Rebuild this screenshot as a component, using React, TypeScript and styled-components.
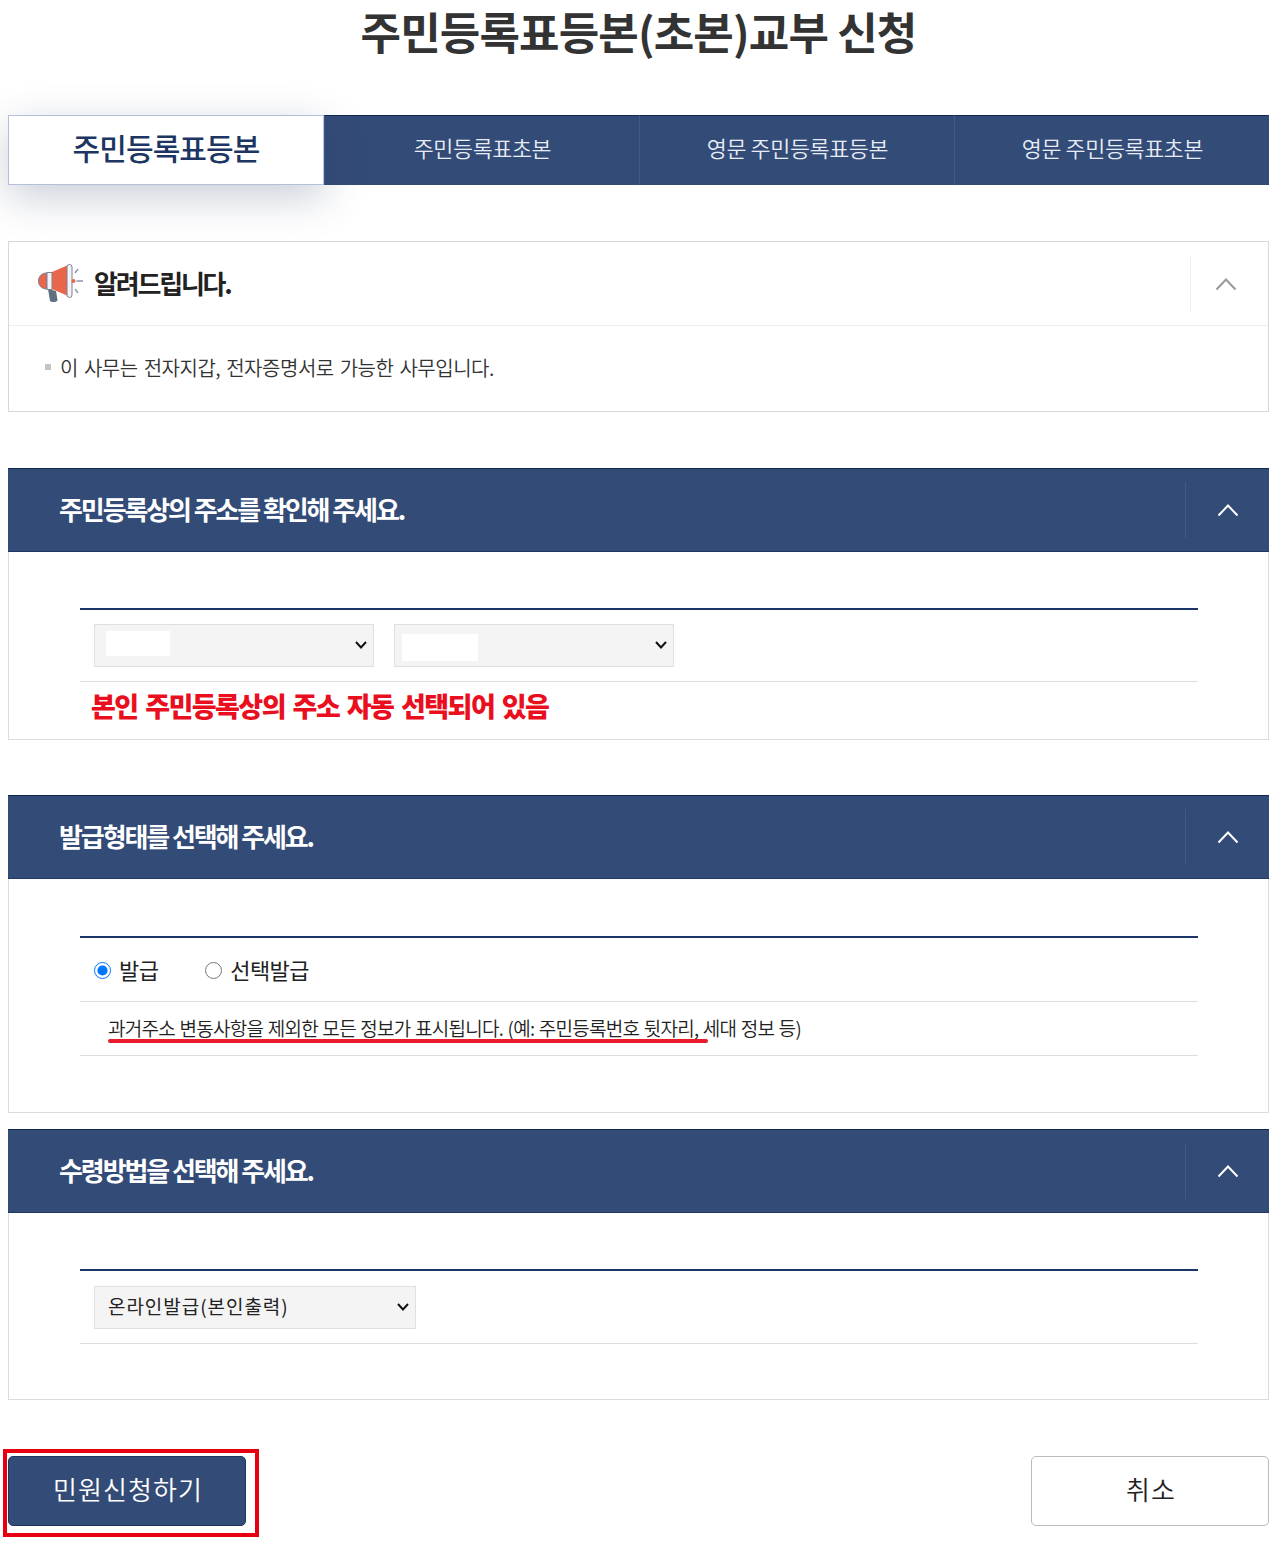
import React from 'react'
import styled, { createGlobalStyle } from 'styled-components'

const GlobalStyle = createGlobalStyle`
  html, body {
    margin: 0;
    padding: 0;
    background: #fff;
  }
  body {
    font-family: 'Noto Sans CJK KR', 'Noto Sans', sans-serif;
    color: #222;
  }
  * {
    box-sizing: border-box;
  }
`

const Page = styled.div`
  width: 1280px;
  height: 1546px;
  padding: 0 11px 0 8px;
  overflow: hidden;
`
const Title = styled.h1`
  margin: 0;
  height: 115px;
  padding-top: 1px;
  text-align: center;
  font-size: 44px;
  line-height: 60px;
  font-weight: 700;
  letter-spacing: -0.85px;
  color: #333;
`
const TabList = styled.ul`
  display: grid;
  grid-template-columns: 316px repeat(3, 315px);
  height: 70px;
  margin: 0 0 56px;
  padding: 0;
  list-style: none;
`
const Tab = styled.li<{ $active?: boolean }>`
  display: flex;
  align-items: center;
  justify-content: center;
  padding: ${(p) => (p.$active ? '0 0 6px' : '0 0 6px 2px')};
  font-size: ${(p) => (p.$active ? '30px' : '21.8px')};
  font-weight: ${(p) => (p.$active ? 500 : 350)};
  letter-spacing: ${(p) => (p.$active ? '-0.9px' : '-0.4px')};
  color: ${(p) => (p.$active ? '#1c3563' : '#e8edf5')};
  background: ${(p) => (p.$active ? '#fff' : '#334b77')};
  border: 1px solid ${(p) => (p.$active ? '#b4c0da' : '#334b77')};
  border-top-color: ${(p) => (p.$active ? '#b4c0da' : '#10294f')};
  border-left-color: ${(p) => (p.$active ? '#b4c0da' : '#43598a')};
  box-shadow: ${(p) => (p.$active ? '0 12px 40px rgba(40, 60, 100, 0.25)' : 'none')};
  position: relative;
  z-index: ${(p) => (p.$active ? 1 : 0)};
`
const Notice = styled.section`
  height: 171px;
  margin-bottom: 56px;
  border: 1px solid #d8d8d8;
`
const NoticeHead = styled.header`
  display: flex;
  align-items: center;
  height: 84px;
  padding-left: 29px;
  border-bottom: 1px solid #eee;
`
const NoticeTitle = styled.h2`
  flex: 1;
  margin: 0 0 2px 10px;
  font-size: 26px;
  font-weight: 700;
  letter-spacing: -2.2px;
  color: #222;
`
const Toggle = styled.div<{ $light?: boolean }>`
  display: flex;
  align-items: center;
  justify-content: center;
  width: ${(p) => (p.$light ? '78px' : '84px')};
  height: 56px;
  padding-right: ${(p) => (p.$light ? '7px' : '0')};
  margin-bottom: ${(p) => (p.$light ? '0' : '1px')};
  border-left: 1px solid ${(p) => (p.$light ? '#f0f0f0' : '#43598a')};
  color: ${(p) => (p.$light ? '#999' : '#fff')};
`
const NoticeBody = styled.p`
  display: flex;
  align-items: center;
  height: 82px;
  margin: 0;
  padding-left: 36px;
  font-size: 20px;
  font-weight: 350;
  letter-spacing: -0.48px;
  word-spacing: 2px;
  color: #333;
  &::before {
    content: '';
    width: 6px;
    height: 6px;
    margin-right: 9px;
    background: #c4c4c4;
  }
`
const Panel = styled.section<{ $height: number; $gap: number }>`
  height: ${(p) => p.$height}px;
  margin-bottom: ${(p) => p.$gap}px;
  border: 1px solid #dcdcdc;
  border-top: 0;
`
const PanelHead = styled.header`
  display: flex;
  align-items: center;
  height: 84px;
  margin: 0 -1px;
  padding-left: 51px;
  background: #334b77;
  border-top: 1px solid #10294f;
  border-bottom: 1px solid #1e3766;
`
const PanelTitle = styled.h2`
  flex: 1;
  margin: 0 0 3px;
  font-size: 26px;
  font-weight: 700;
  letter-spacing: -2.1px;
  color: #fff;
`
const PanelBody = styled.div<{ $top: number }>`
  margin: ${(p) => p.$top}px 70px 0 71px;
  border-top: 2px solid #1a3566;
`
const FieldRow = styled.div<{ $height: number }>`
  display: flex;
  align-items: center;
  gap: 20px;
  height: ${(p) => p.$height}px;
  padding-left: 14px;
  border-bottom: 1px solid #ddd;
`
const SelectWrap = styled.div<{ $width: number }>`
  position: relative;
  width: ${(p) => p.$width}px;
  height: 43px;
`
const Select = styled.select`
  display: block;
  width: 100%;
  height: 100%;
  padding: 0 0 3px 13px;
  appearance: none;
  background: #f4f4f4;
  border: 1px solid #e0e0e0;
  border-radius: 0;
  outline: 0;
  font-family: inherit;
  font-size: 19px;
  letter-spacing: 0.95px;
  color: #222;
`
const SelectArrow = styled.svg`
  position: absolute;
  right: 6px;
  top: 15px;
  pointer-events: none;
`
const Redaction = styled.span<{ $left: number; $top: number; $width: number; $height: number }>`
  position: absolute;
  left: ${(p) => p.$left}px;
  top: ${(p) => p.$top}px;
  width: ${(p) => p.$width}px;
  height: ${(p) => p.$height}px;
  background: #fff;
`
const Alert = styled.p`
  margin: 7px 0 0 11px;
  font-size: 27px;
  line-height: 34px;
  font-weight: 900;
  letter-spacing: -1.55px;
  word-spacing: 3px;
  color: #ea0f1e;
`
const RadioLabel = styled.label`
  display: flex;
  align-items: center;
  gap: 8px;
  margin: 0 27px 2px 0;
  font-size: 22px;
  font-weight: 400;
  letter-spacing: -0.6px;
  color: #222;
`
const Radio = styled.input`
  width: 17px;
  height: 17px;
  margin: 3px 0 0;
`
const Description = styled.div`
  display: flex;
  align-items: center;
  height: 54px;
  padding: 0 0 2px 28px;
  border-bottom: 1px solid #ddd;
  font-size: 19px;
  font-weight: 350;
  letter-spacing: -0.7px;
  word-spacing: 0.8px;
  color: #222;
`
const Marked = styled.span`
  position: relative;
  &::after {
    content: '';
    position: absolute;
    left: 0;
    bottom: -2px;
    width: 600px;
    height: 4px;
    border-radius: 2px;
    background: #ea1c2c;
  }
`
const Actions = styled.div`
  display: flex;
  justify-content: space-between;
`
const Highlight = styled.div`
  position: relative;
  &::before {
    content: '';
    position: absolute;
    inset: -7px -13px -11px -5px;
    border: 4px solid #e60012;
    pointer-events: none;
  }
`
const Button = styled.button<{ $primary?: boolean }>`
  display: block;
  width: 238px;
  height: 70px;
  padding: 0 0 6px 2px;
  font-family: inherit;
  font-size: 26px;
  font-weight: 350;
  letter-spacing: 1.1px;
  border-radius: 5px;
  border: 1px solid ${(p) => (p.$primary ? '#1c3563' : '#bbb')};
  background: ${(p) => (p.$primary ? '#334b77' : '#fff')};
  color: ${(p) => (p.$primary ? '#fff' : '#222')};
`

const Chevron = () => (
  <svg width="22" height="14" viewBox="0 0 22 14" fill="none" stroke="currentColor" strokeWidth="2">
    <path d="M1.5 12.5 11 2.5l9.5 10" />
  </svg>
)

const Arrow = () => (
  <SelectArrow width="14" height="12" viewBox="0 0 14 12" fill="none" stroke="#111" strokeWidth="2">
    <path d="M2 3l5 5.500L12 3" />
  </SelectArrow>
)

const Megaphone = () => (
  <svg width="46" height="40" viewBox="0 0 46 40">
    <path d="M10 25l8 2 1.500 9c.3 2-5.500 3-7.500 1z" fill="#5f7180" />
    <path d="M9 9C3 9 .5 13 .5 17S3 25 9 25z" fill="#e8674a" stroke="#7b8197" />
    <path d="M14 8 29 1.500v30L14 25z" fill="#e8674a" />
    <rect x="9" y="8.500" width="5" height="17" fill="#f3f3f6" stroke="#7b8197" />
    <rect x="29" y=".5" width="5" height="33" rx="2.500" fill="#f3f3f6" stroke="#7b8197" />
    <circle cx="35.500" cy="17" r="2" fill="#e8674a" />
    <path d="M37 9l3-4M38.500 17H45M37 25l3 4" stroke="#8a93a8" strokeWidth="1.300" fill="none" />
  </svg>
)

const Section = ({
  title,
  height,
  gap,
  bodyTop = 56,
  children
}: {
  title: string
  height: number
  gap: number
  bodyTop?: number
  children: React.ReactNode
}) => (
  <Panel $height={height} $gap={gap}>
    <PanelHead>
      <PanelTitle>{title}</PanelTitle>
      <Toggle>
        <Chevron />
      </Toggle>
    </PanelHead>
    <PanelBody $top={bodyTop}>{children}</PanelBody>
  </Panel>
)

export default function App() {
  return (
    <Page>
      <GlobalStyle />
      <Title>주민등록표등본(초본)교부 신청</Title>

      <TabList>
        <Tab $active>주민등록표등본</Tab>
        <Tab>주민등록표초본</Tab>
        <Tab>영문 주민등록표등본</Tab>
        <Tab>영문 주민등록표초본</Tab>
      </TabList>

      <Notice>
        <NoticeHead>
          <Megaphone />
          <NoticeTitle>알려드립니다.</NoticeTitle>
          <Toggle $light>
            <Chevron />
          </Toggle>
        </NoticeHead>
        <NoticeBody>이 사무는 전자지갑, 전자증명서로 가능한 사무입니다.</NoticeBody>
      </Notice>

      <Section title="주민등록상의 주소를 확인해 주세요." height={272} gap={55}>
        <FieldRow $height={72}>
          <SelectWrap $width={280}>
            <Select />
            <Arrow />
            <Redaction $left={12} $top={7} $width={64} $height={25} />
          </SelectWrap>
          <SelectWrap $width={280}>
            <Select />
            <Arrow />
            <Redaction $left={8} $top={10} $width={76} $height={27} />
          </SelectWrap>
        </FieldRow>
        <Alert>본인 주민등록상의 주소 자동 선택되어 있음</Alert>
      </Section>

      <Section title="발급형태를 선택해 주세요." height={318} gap={16} bodyTop={57}>
        <FieldRow $height={64}>
          <RadioLabel>
            <Radio type="radio" name="kind" defaultChecked />
            발급
          </RadioLabel>
          <RadioLabel>
            <Radio type="radio" name="kind" />
            선택발급
          </RadioLabel>
        </FieldRow>
        <Description>
          <Marked>과거주소 변동사항을 제외한 모든 정보가 표시됩니다. (예: 주민등록번호 뒷자리, 세대 정보 등)</Marked>
        </Description>
      </Section>

      <Section title="수령방법을 선택해 주세요." height={271} gap={56}>
        <FieldRow $height={73}>
          <SelectWrap $width={322}>
            <Select defaultValue="online">
              <option value="online">온라인발급(본인출력)</option>
            </Select>
            <Arrow />
          </SelectWrap>
        </FieldRow>
      </Section>

      <Actions>
        <Highlight>
          <Button $primary>민원신청하기</Button>
        </Highlight>
        <Button>취소</Button>
      </Actions>
    </Page>
  )
}
